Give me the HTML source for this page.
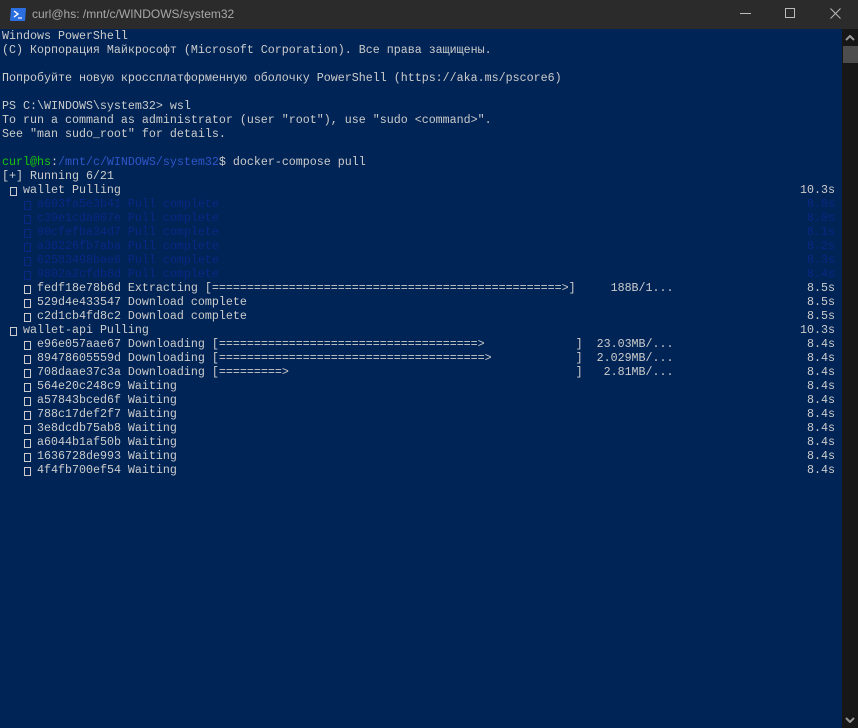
<!DOCTYPE html>
<html><head><meta charset="utf-8"><style>
*{margin:0;padding:0;box-sizing:border-box}
body{width:858px;height:728px;overflow:hidden;background:#012456;position:relative;font-family:"Liberation Mono",monospace}
#tb{position:absolute;left:0;top:0;width:858px;height:29px;background:#2b2b2b}
#tt{position:absolute;left:32px;top:7px;font:12px "Liberation Sans",sans-serif;color:#a8a8a8}
#sb{position:absolute;left:842px;top:29px;width:16px;height:699px;background:#171717}
#th{position:absolute;left:843px;top:46px;width:15px;height:17px;background:#4d4d4d}
#con{position:absolute;left:2px;top:29px;width:833px;font-size:11.67px;line-height:14px;color:#cccccc}
.l{height:14px;position:relative;white-space:pre}
.r{position:absolute;right:0;top:0}
.g{color:#16c60c}.p{color:#2f56c8}.d{color:#0a2784}
.b{display:inline-block;width:7px;height:14px;position:relative;vertical-align:top}
.b::after{content:"";position:absolute;left:1px;top:4px;width:5px;height:7px;border:1px solid currentColor}
</style></head><body>
<div id="tb">
<svg style="position:absolute;left:10px;top:8px" width="16" height="13" viewBox="0 0 16 13"><path d="M1 0H16L15 13H0Z" fill="#2a6ee0"/><path d="M4 3L8 6L4 9" stroke="#fff" stroke-width="1.4" fill="none"/><path d="M8 10H12" stroke="#fff" stroke-width="1.2"/></svg>
<div id="tt">curl@hs: /mnt/c/WINDOWS/system32</div>
<div style="position:absolute;left:740px;top:13px;width:11px;height:1px;background:#bbb"></div>
<div style="position:absolute;left:785px;top:8px;width:10px;height:10px;border:1px solid #bbb"></div>
<svg style="position:absolute;left:830px;top:8px" width="11" height="11"><path d="M0.5 0.5L10.5 10.5M10.5 0.5L0.5 10.5" stroke="#bbb" stroke-width="1"/></svg>
</div>
<div id="sb"></div><div id="th"></div>
<svg style="position:absolute;left:845px;top:35px" width="10" height="6"><path d="M1 5L5 1L9 5" stroke="#999" stroke-width="2" fill="none"/></svg>
<svg style="position:absolute;left:845px;top:717px" width="10" height="6"><path d="M1 1L5 5L9 1" stroke="#999" stroke-width="2" fill="none"/></svg>
<div id="con"><div class="l">Windows PowerShell</div><div class="l">(C) Корпорация Майкрософт (Microsoft Corporation). Все права защищены.</div><div class="l"></div><div class="l">Попробуйте новую кроссплатформенную оболочку PowerShell (https://aka.ms/pscore6)</div><div class="l"></div><div class="l">PS C:\WINDOWS\system32&gt; wsl</div><div class="l">To run a command as administrator (user "root"), use "sudo &lt;command&gt;".</div><div class="l">See "man sudo_root" for details.</div><div class="l"></div><div class="l"><span class="g">curl@hs</span>:<span class="p">/mnt/c/WINDOWS/system32</span>$ docker-compose pull</div><div class="l">[+] Running 6/21</div><div class="l"> <span class="b"></span> wallet Pulling<span class="r">10.3s</span></div><div class="l d">   <span class="b"></span> a603fa5e3b41 Pull complete<span class="r">8.0s</span></div><div class="l d">   <span class="b"></span> c39e1cda007e Pull complete<span class="r">8.0s</span></div><div class="l d">   <span class="b"></span> 90cfefba34d7 Pull complete<span class="r">8.1s</span></div><div class="l d">   <span class="b"></span> a38226fb7aba Pull complete<span class="r">8.2s</span></div><div class="l d">   <span class="b"></span> 62583498bae6 Pull complete<span class="r">8.3s</span></div><div class="l d">   <span class="b"></span> 9802a2cfdb8d Pull complete<span class="r">8.4s</span></div><div class="l">   <span class="b"></span> fedf18e78b6d Extracting [==================================================&gt;]     188B/1...<span class="r">8.5s</span></div><div class="l">   <span class="b"></span> 529d4e433547 Download complete<span class="r">8.5s</span></div><div class="l">   <span class="b"></span> c2d1cb4fd8c2 Download complete<span class="r">8.5s</span></div><div class="l"> <span class="b"></span> wallet-api Pulling<span class="r">10.3s</span></div><div class="l">   <span class="b"></span> e96e057aae67 Downloading [=====================================&gt;             ]  23.03MB/...<span class="r">8.4s</span></div><div class="l">   <span class="b"></span> 89478605559d Downloading [======================================&gt;            ]  2.029MB/...<span class="r">8.4s</span></div><div class="l">   <span class="b"></span> 708daae37c3a Downloading [=========&gt;                                         ]   2.81MB/...<span class="r">8.4s</span></div><div class="l">   <span class="b"></span> 564e20c248c9 Waiting<span class="r">8.4s</span></div><div class="l">   <span class="b"></span> a57843bced6f Waiting<span class="r">8.4s</span></div><div class="l">   <span class="b"></span> 788c17def2f7 Waiting<span class="r">8.4s</span></div><div class="l">   <span class="b"></span> 3e8dcdb75ab8 Waiting<span class="r">8.4s</span></div><div class="l">   <span class="b"></span> a6044b1af50b Waiting<span class="r">8.4s</span></div><div class="l">   <span class="b"></span> 1636728de993 Waiting<span class="r">8.4s</span></div><div class="l">   <span class="b"></span> 4f4fb700ef54 Waiting<span class="r">8.4s</span></div></div>
</body></html>
